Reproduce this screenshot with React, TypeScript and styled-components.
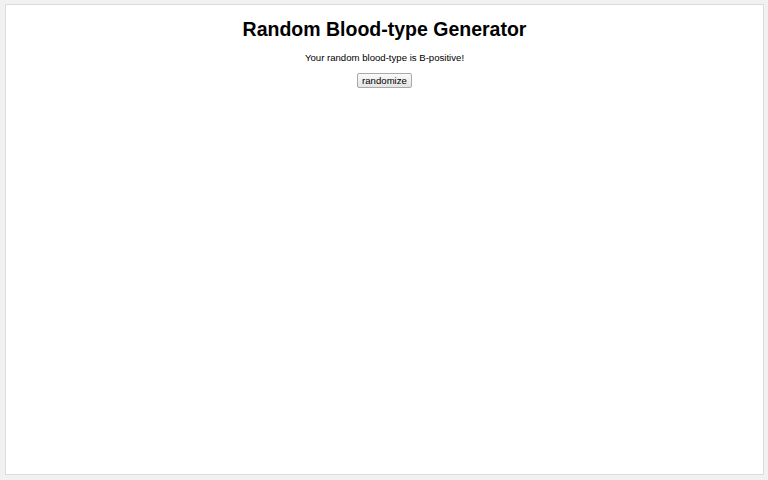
import { useState } from 'react';
import styled, { createGlobalStyle } from 'styled-components';

const types = ['A', 'B', 'AB', 'O'];

const GlobalStyle = createGlobalStyle`
    html, body {
        margin: 0;
        padding: 0;
        height: 100%;
        background: #f1f1f1;
    }
    #root {
        height: 100%;
    }
`;

const Page = styled.div`
    box-sizing: border-box;
    height: 100%;
    padding: 4px 4px 5px 5px;
    display: flex;
`;

const Panel = styled.main`
    flex: 1;
    background: #fff;
    border: 1px solid #dcdcdc;
    display: flex;
    flex-direction: column;
    align-items: center;
    font-family: 'Liberation Sans', Arial, sans-serif;
    color: #000;
`;

const Title = styled.h1`
    margin: 13px 0 0;
    font-size: 19.5px;
    line-height: 22px;
    font-weight: bold;
`;

const Result = styled.p`
    margin: 12px 0 0;
    font-size: 9.6px;
    line-height: 12px;
`;

const RandomButton = styled.button`
    margin-top: 9px;
    padding: 0 4px;
    height: 15px;
    font-family: 'Liberation Sans', Arial, sans-serif;
    font-size: 9.6px;
    color: #000;
    background: linear-gradient(#fafafa, #e4e4e4);
    border: 1px solid #a9a9a9;
    border-radius: 2px;
    cursor: pointer;
`;

const App = () => {
    const [blood, setBlood] = useState('B-positive');

    const randomize = () => {
        const t = types[Math.floor(Math.random() * types.length)];
        const sign = Math.random() < 0.5 ? 'positive' : 'negative';
        setBlood(`${t}-${sign}`);
    };

    return (
        <>
            <GlobalStyle />
            <Page>
                <Panel>
                    <Title>Random Blood-type Generator</Title>
                    <Result>Your random blood-type is {blood}!</Result>
                    <RandomButton onClick={randomize}>randomize</RandomButton>
                </Panel>
            </Page>
        </>
    );
};

export default App;
